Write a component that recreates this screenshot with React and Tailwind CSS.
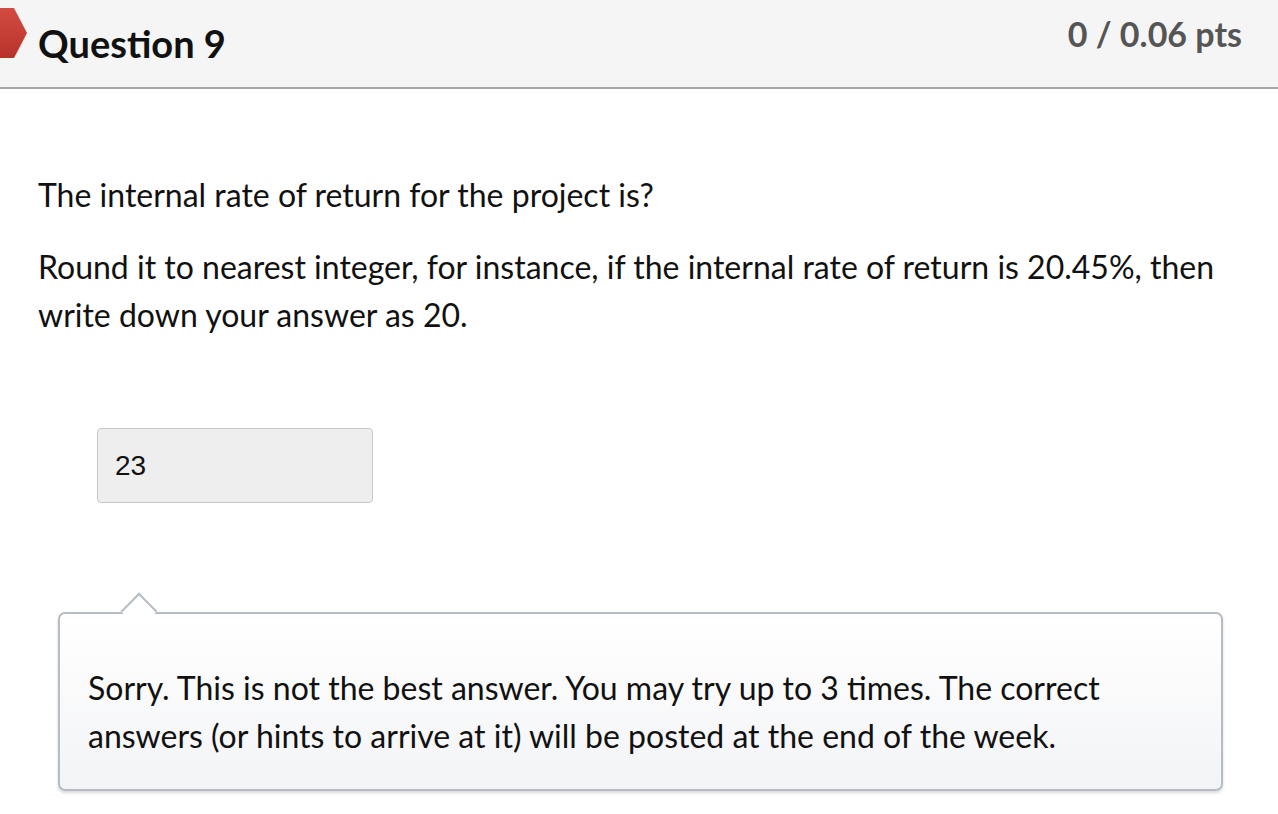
export default function App() {
    return (
        <div className="min-h-[814px] bg-white font-['Lato','Noto_Sans',sans-serif] text-[#111]">
            {/* En-tête de la question */}
            <div className="relative h-[89px] bg-[#f5f5f5] border-b-2 border-[#a8a8a8] flex justify-between pl-[38px] pr-[36px]">
                <svg className="absolute left-0 top-[7px]" width="28" height="52" viewBox="0 0 28 52">
                    <defs>
                        <linearGradient id="rg" x1="0" y1="0" x2="0" y2="1">
                            <stop offset="0" stopColor="#d24c42" />
                            <stop offset="1" stopColor="#b8322b" />
                        </linearGradient>
                    </defs>
                    <path d="M0 1 L14 1 L27 26 L14 51 L0 51 Z" fill="url(#rg)" />
                </svg>
                <h2 className="text-[38px] font-bold pt-[21px] leading-[44px]">Question 9</h2>
                <div className="text-[34px] font-bold text-[#555] pt-[12px] leading-[44px]">0 / 0.06 pts</div>
            </div>

            {/* Texte de la question */}
            <div className="pl-[38px] pr-[40px] pt-[82px] text-[32px] leading-[48px]">
                <p>The internal rate of return for the project is?</p>
                <p className="mt-[24px]">Round it to nearest integer, for instance, if the internal rate of return is 20.45%, then write down your answer as 20.</p>
            </div>

            {/* Réponse */}
            <div className="pl-[97px] pt-[89px]">
                <div className="w-[276px] h-[75px] bg-[#eeeeee] border border-[#c8c8c8] rounded-[4px] flex items-center pl-[17px] font-['Liberation_Sans',Arial,sans-serif] text-[28px]">23</div>
            </div>

            {/* Commentaire */}
            <div className="relative ml-[58px] mr-[55px] mt-[109px]">
                <div className="absolute left-[68px] top-[-14px] w-[26px] h-[26px] rotate-45 border-l-2 border-t-2 border-[#b5bcc4] bg-white"></div>
                <div className="rounded-[7px] border-2 border-[#b5bcc4] bg-gradient-to-b from-white to-[#f3f4f6] shadow-[0_2px_3px_rgba(0,0,0,0.15)] h-[179px] pl-[28px] pr-[60px] pt-[50px] text-[32px] leading-[48px]">
                    Sorry. This is not the best answer. You may try up to 3 times. The correct answers (or hints to arrive at it) will be posted at the end of the week.
                </div>
            </div>
        </div>
    );
}
